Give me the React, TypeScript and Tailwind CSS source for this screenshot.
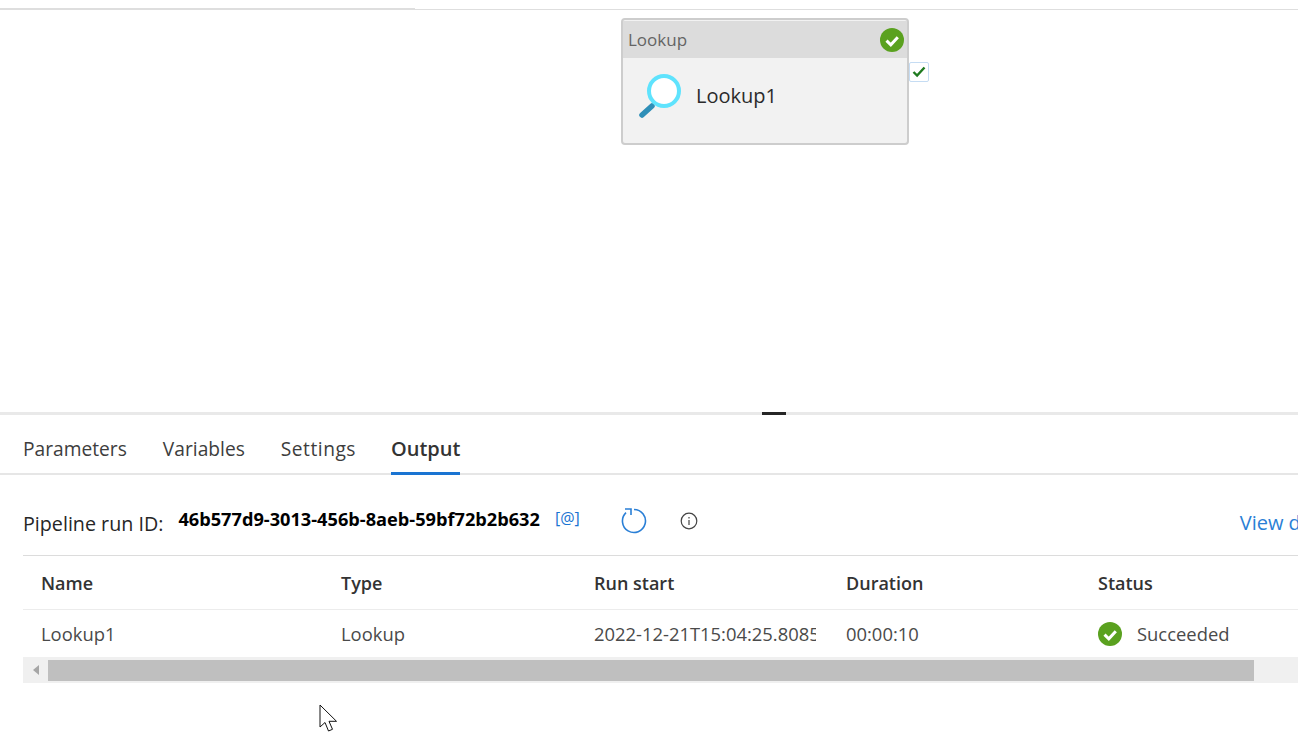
const font = { fontFamily: '"Open Sans", sans-serif' }

function SuccessIcon({ size = 24 }: { size?: number }) {
    return (
        <svg width={size} height={size} viewBox="0 0 24 24" className="shrink-0">
            <circle cx="12" cy="12" r="12" fill="#5aa11f" />
            <path d="M6.5 12.6l4.3 4.2 7-7.6" fill="none" stroke="#fff" strokeWidth="3" />
        </svg>
    )
}

function LookupNode() {
    return (
        <div className="absolute left-[621px] top-[18px] w-[288px] h-[127px] rounded-[4px] border-2 border-[#cdcdcd] bg-[#f2f2f2] pt-[1px]">
            <div className="h-[37px] bg-[#dcdcdc] flex items-center justify-between pl-[5px] pr-[3px]">
                <span className="text-[17px] text-[#646464] pt-[1px]">Lookup</span>
                <SuccessIcon />
            </div>
            <div className="flex items-center pl-[15px] pt-[14px] gap-[12px]">
                <svg width="46" height="46" viewBox="0 0 46 46">
                    <path d="M14 34L4 43" stroke="#2f8fb8" strokeWidth="5.5" strokeLinecap="round" />
                    <circle cx="26" cy="19" r="15" fill="#fff" stroke="#5fe3fd" strokeWidth="4" />
                </svg>
                <span className="text-[20px] text-[#2b2b2b] mt-[1px]">Lookup1</span>
            </div>
            <div className="absolute left-[286px] top-[42px] w-[20px] h-[20px] bg-white border border-[#c5dcf3] rounded-[2px] flex items-center justify-center">
                <svg width="14" height="12" viewBox="0 0 14 12">
                    <path d="M1.5 6l3.6 3.6L12.5 1.5" fill="none" stroke="#1f7a1f" strokeWidth="2.4" />
                </svg>
            </div>
        </div>
    )
}

const columns = [
    { title: "Name", width: "w-[300px]", value: "Lookup1" },
    { title: "Type", width: "w-[253px]", value: "Lookup" },
    { title: "Run start", width: "w-[252px]", value: "2022-12-21T15:04:25.8085" },
    { title: "Duration", width: "w-[252px]", value: "00:00:10" },
]

export default function App() {
    return (
        <div style={font} className="w-[1298px] h-[734px] bg-white overflow-hidden relative">
            {/* Canvas */}
            <div className="relative h-[412px] pt-[8px]">
                <div className="flex items-end h-[2px]">
                    <div className="w-[415px] h-[2px] bg-[#dedede]" />
                    <div className="flex-1 h-[1px] bg-[#dedede]" />
                </div>
                <LookupNode />
            </div>

            {/* Splitter */}
            <div className="h-[3px] bg-[#e9e9e9] flex justify-center">
                <div className="w-[24px] h-[3px] bg-[#262626] ml-[250px]" />
            </div>

            {/* Tabs */}
            <div className="h-[60px] border-b-2 border-[#e6e6e6] flex gap-[36px] pl-[23px] text-[#3d3d3d] text-[19.2px]">
                <span className="pt-[20px]">Parameters</span>
                <span className="pt-[20px]">Variables</span>
                <span className="pt-[20px] tracking-[0.5px]">Settings</span>
                <span className="pt-[19px] ml-[-1px] h-[60px] border-b-[3px] border-[#1a74d2] text-[20px] font-semibold text-[#333]">Output</span>
            </div>

            {/* Run info */}
            <div className="h-[80px] flex items-center pl-[23px] whitespace-nowrap">
                <span className="text-[19.7px] text-[#262626] pt-[18px]">Pipeline run ID:</span>
                <span className="text-[18.2px] font-bold text-black ml-[15px] pt-[10px]">46b577d9-3013-456b-8aeb-59bf72b2b632</span>
                <span className="text-[16px] text-[#1a74d2] ml-[15px] pt-[5px]">[@]</span>
                <svg width="26" height="27" viewBox="0 0 26 27" className="ml-[41px] mt-[11px] shrink-0">
                    <path d="M5 5.7A11.5 11.5 0 1 0 13 2.5" fill="none" stroke="#2a7fd6" strokeWidth="1.6" />
                    <path d="M4 2h6v6" fill="none" stroke="#2a7fd6" strokeWidth="1.6" />
                </svg>
                <svg width="18" height="18" viewBox="0 0 18 18" className="ml-[33px] mt-[11px] shrink-0">
                    <circle cx="9" cy="9" r="7.8" fill="none" stroke="#444" strokeWidth="1.2" />
                    <path d="M9 8v5M9 5v1.4" stroke="#444" strokeWidth="1.2" />
                </svg>
                <span className="text-[20px] text-[#2a7fd6] ml-[542px] pt-[16px]">View details</span>
            </div>

            {/* Table */}
            <div className="ml-[23px] border-t border-[#dcdcdc]">
                <div className="h-[54px] flex items-center pl-[18px] pt-[2px] border-b border-[#ececec] text-[18px] font-semibold text-[#333] whitespace-nowrap">
                    {columns.map((c) => (
                        <span key={c.title} className={c.width}>{c.title}</span>
                    ))}
                    <span>Status</span>
                </div>
                <div className="h-[47px] flex items-center pl-[18px] text-[18.4px] text-[#4a4a4a] whitespace-nowrap">
                    {columns.map((c) => (
                        <span key={c.title} className={`${c.width} pt-[1px]`}>
                            <span className="block w-[222px] overflow-hidden">{c.value}</span>
                        </span>
                    ))}
                    <SuccessIcon />
                    <span className="ml-[15px] pt-[1px]">Succeeded</span>
                </div>
                <div className="h-[26px] bg-[#f0f0f0] flex items-center">
                    <div className="w-[25px] flex justify-center">
                        <div className="w-0 h-0 border-y-[5px] border-y-transparent border-r-[6px] border-r-[#a6a6a6]" />
                    </div>
                    <div className="w-[1206px] h-[21px] bg-[#bfbfbf]" />
                </div>
            </div>

            {/* Mouse cursor */}
            <svg width="20" height="29" viewBox="0 0 20 29" className="absolute left-[319px] top-[704px]">
                <path d="M1 1v22l5-4.5 3.5 8.5 4-1.7-3.5-8H17.5z" fill="#fff" stroke="#111" strokeWidth="1" />
            </svg>
        </div>
    )
}
